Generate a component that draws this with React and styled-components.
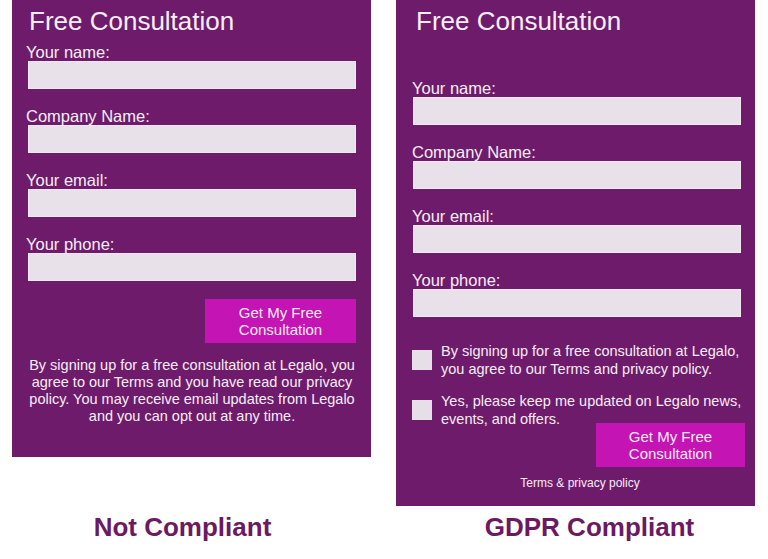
import styled, { createGlobalStyle } from "styled-components";

const GlobalStyle = createGlobalStyle`
  html, body {
    margin: 0;
    padding: 0;
    background: #ffffff;
  }
  body {
    font-family: "Liberation Sans", Arial, Helvetica, sans-serif;
  }
`;

const Page = styled.div`
  display: flex;
  gap: 25px;
  padding-left: 12px;
  width: 768px;
  height: 559px;
  box-sizing: border-box;
`;

const Column = styled.div`
  display: flex;
  flex-direction: column;
  width: 359px;
`;

const PanelSlot = styled.div`
  height: 505px;
`;

const Panel = styled.div`
  background-color: #6e1b6c;
  color: #f6eef6;
  box-sizing: border-box;
  padding: 6px ${(p) => p.$padRight}px ${(p) => p.$padBottom}px
    ${(p) => p.$padLeft}px;
  display: flex;
  flex-direction: column;
`;

const Title = styled.h1`
  margin: 0 0 ${(p) => p.$gap}px ${(p) => p.$indent}px;
  font-size: 26px;
  line-height: 30px;
  font-weight: normal;
`;

const Field = styled.div`
  display: flex;
  flex-direction: column;
  margin-bottom: 18px;
`;

const Label = styled.label`
  font-size: 16.5px;
  line-height: 18px;
  margin-left: ${(p) => p.$indent}px;
`;

const TextInput = styled.input`
  display: block;
  height: 28px;
  width: 100%;
  box-sizing: border-box;
  border: 1px solid #f0e9f1;
  background-color: #e9e1ea;
  outline: none;
`;

const Button = styled.button`
  align-self: flex-end;
  width: ${(p) => p.$width}px;
  height: 44px;
  margin: ${(p) => p.$top}px ${(p) => p.$right}px 0 0;
  border: none;
  background-color: #c414b3;
  color: #f8ecf6;
  font-family: inherit;
  font-size: 15px;
  line-height: 17px;
  text-align: center;
  padding: 0;
`;

const Disclaimer = styled.p`
  margin: 14px 0 0;
  font-size: 14.5px;
  line-height: 17px;
  text-align: center;
`;

const CheckRow = styled.label`
  display: flex;
  align-items: center;
  gap: 9px;
  margin: ${(p) => p.$top}px -8px 0 0;
  font-size: 14.5px;
  line-height: 18px;
`;

const CheckBox = styled.input.attrs({ type: "checkbox" })`
  appearance: none;
  flex: none;
  width: 20px;
  height: 20px;
  margin: 0 0 0 -1px;
  background-color: #e6dfe8;
  border: none;
`;

const SmallLink = styled.div`
  margin-top: 9px;
  font-size: 12px;
  line-height: 14px;
  text-align: center;
  padding-left: 6px;
`;

const Caption = styled.div`
  margin-top: 6px;
  font-size: 26px;
  font-weight: bold;
  line-height: 32px;
  color: #6b1a62;
  text-align: center;
  transform: translateX(${(p) => p.$shift}px);
`;

const fields = ["Your name:", "Company Name:", "Your email:", "Your phone:"];

const FormFields = ({ indent }) =>
  fields.map((f) => (
    <Field key={f}>
      <Label $indent={indent}>{f}</Label>
      <TextInput />
    </Field>
  ));

const App = () => {
  return (
    <>
      <GlobalStyle />
      <Page>
        <Column>
          <PanelSlot>
            <Panel $padLeft={16} $padRight={15} $padBottom={32}>
              <Title $gap={7} $indent={1}>
                Free Consultation
              </Title>
              <FormFields indent={-2} />
              <Button $width={151} $top={0} $right={0}>
                Get My Free
                <br />
                Consultation
              </Button>
              <Disclaimer>
                By signing up for a free consultation at Legalo, you agree to
                our Terms and you have read our privacy policy. You may receive
                email updates from Legalo and you can opt out at any time.
              </Disclaimer>
            </Panel>
          </PanelSlot>
          <Caption $shift={-9}>Not Compliant</Caption>
        </Column>

        <Column>
          <PanelSlot>
            <Panel $padLeft={17} $padRight={14} $padBottom={16}>
              <Title $gap={43} $indent={3}>
                Free Consultation
              </Title>
              <FormFields indent={-1} />
              <CheckRow $top={7}>
                <CheckBox />
                <span>
                  By signing up for a free consultation at Legalo, you agree to
                  our Terms and privacy policy.
                </span>
              </CheckRow>
              <CheckRow $top={14}>
                <CheckBox />
                <span>
                  Yes, please keep me updated on Legalo news, events, and
                  offers.
                </span>
              </CheckRow>
              <Button $width={149} $top={-5} $right={-4}>
                Get My Free
                <br />
                Consultation
              </Button>
              <SmallLink>Terms &amp; privacy policy</SmallLink>
            </Panel>
          </PanelSlot>
          <Caption $shift={14}>GDPR Compliant</Caption>
        </Column>
      </Page>
    </>
  );
};

export default App;
